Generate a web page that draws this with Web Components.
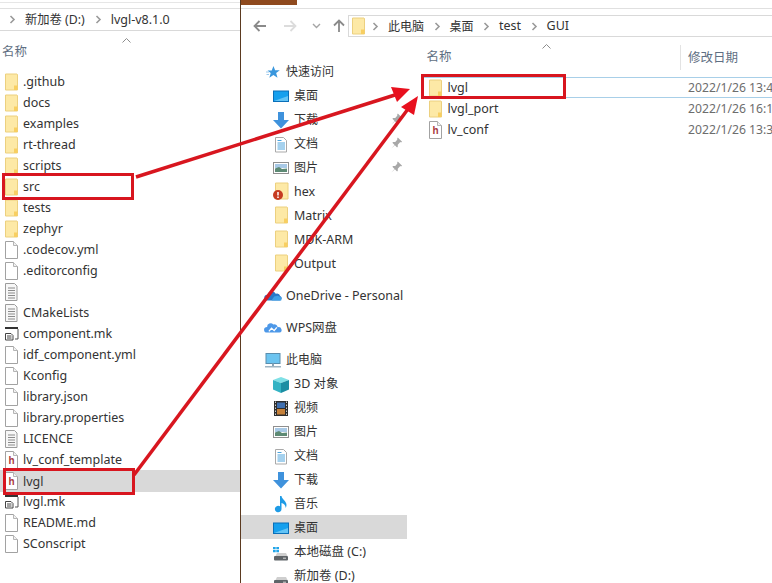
<!DOCTYPE html>
<html>
<head>
<meta charset="utf-8">
<style>
  html, body { margin: 0; background: #fff; }
</style>
</head>
<body>
<shot-page>
  <left-pane slot="left">
    <file-row icon="folder">.github</file-row>
    <file-row icon="folder">docs</file-row>
    <file-row icon="folder">examples</file-row>
    <file-row icon="folder">rt-thread</file-row>
    <file-row icon="folder">scripts</file-row>
    <file-row icon="folder">src</file-row>
    <file-row icon="folder">tests</file-row>
    <file-row icon="folder">zephyr</file-row>
    <file-row icon="file">.codecov.yml</file-row>
    <file-row icon="file">.editorconfig</file-row>
    <file-row icon="text"></file-row>
    <file-row icon="text">CMakeLists</file-row>
    <file-row icon="make">component.mk</file-row>
    <file-row icon="file">idf_component.yml</file-row>
    <file-row icon="file">Kconfig</file-row>
    <file-row icon="file">library.json</file-row>
    <file-row icon="file">library.properties</file-row>
    <file-row icon="text">LICENCE</file-row>
    <file-row icon="hfile">lv_conf_template</file-row>
    <file-row icon="hfile" selected>lvgl</file-row>
    <file-row icon="make">lvgl.mk</file-row>
    <file-row icon="file">README.md</file-row>
    <file-row icon="file">SConscript</file-row>
  </left-pane>
  <right-window slot="right">
    <nav-pane slot="nav">
      <nav-row icon="star" top cjk>快速访问</nav-row>
      <nav-row icon="desktop" sub cjk>桌面</nav-row>
      <nav-row icon="download" sub pinned cjk>下载</nav-row>
      <nav-row icon="doc" sub pinned cjk>文档</nav-row>
      <nav-row icon="picture" sub pinned cjk>图片</nav-row>
      <nav-row icon="folderwarn" sub>hex</nav-row>
      <nav-row icon="navfolder" sub>Matrix</nav-row>
      <nav-row icon="navfolder" sub>MDK-ARM</nav-row>
      <nav-row icon="navfolder" sub>Output</nav-row>
      <nav-row icon="onedrive" top group>OneDrive - Personal</nav-row>
      <nav-row icon="wps" top group>WPS网盘</nav-row>
      <nav-row icon="pc" top group cjk>此电脑</nav-row>
      <nav-row icon="cube" sub>3D 对象</nav-row>
      <nav-row icon="film" sub cjk>视频</nav-row>
      <nav-row icon="picture" sub cjk>图片</nav-row>
      <nav-row icon="doc" sub cjk>文档</nav-row>
      <nav-row icon="download" sub cjk>下载</nav-row>
      <nav-row icon="music" sub cjk>音乐</nav-row>
      <nav-row icon="desktop" sub selected cjk>桌面</nav-row>
      <nav-row icon="drivec" sub>本地磁盘 (C:)</nav-row>
      <nav-row icon="drive" sub>新加卷 (D:)</nav-row>
    </nav-pane>
    <list-pane slot="list">
      <list-row icon="folder" date="2022/1/26 13:4" focused>lvgl</list-row>
      <list-row icon="folder" date="2022/1/26 16:1">lvgl_port</list-row>
      <list-row icon="hfile" date="2022/1/26 13:3">lv_conf</list-row>
    </list-pane>
  </right-window>
</shot-page>

<script>
(function () {

  const FONT = '"Noto Sans", "Noto Sans CJK SC", sans-serif';

  const chevron = '<svg width="7" height="9" viewBox="0 0 7 9"><path d="M1.5 1l3.500 3.500L1.5 8" fill="none" stroke="#9a9a9a" stroke-width="1.6"/></svg>';
  const caret = '<svg width="9" height="5" viewBox="0 0 9 5"><path d="M.5 4.500l4-4 4 4" fill="none" stroke="#8d8d8d"/></svg>';

  const folderBody = '<path d="M2.500 2h11.500l.5.500V18h-12z" fill="#fde9a6" stroke="#ecd07f"/><path d="M11 18v-4.500h3.500V18z" fill="#f8cf62"/>';
  const pageBody = '<path d="M2.500 1.500h8l4 4v13h-12z" fill="#fff" stroke="#a2a2a2"/><path d="M10.500 1.500v4h4" fill="#f1f1f1" stroke="#b5b5b5"/>';

  const drive = '<path d="M4.500 15l1.500-3h9l1.500 3z" fill="#cfcfcf"/><rect x="3" y="15" width="14" height="4.500" rx="1" fill="#5f6468"/><path d="M12 17.200h3" stroke="#d8d8d8"/>';

  const icons = {
    folder: folderBody,
    navfolder: '<g transform="translate(2 0)">' + folderBody + '</g>',
    file: pageBody,
    text: '<path d="M2.500 1.500h9l2.500 2.500v14.500H2.500z" fill="#f7f7f7" stroke="#9c9c9c"/><path d="M5 6h7M5 8.500h7M5 11h7M5 13.500h7M5 16h7" stroke="#8b8b8b"/>',
    make: '<path d="M2 3h13v2H2z" fill="#333"/><path d="M15 5v10h-3" fill="none" stroke="#555"/><path d="M2.500 9.500h5.500l2 2v4.500H2.500z" fill="#fff" stroke="#444"/><path d="M4 12h4.500M4 14h4.500" stroke="#444"/>',
    hfile: pageBody + '<text x="8.500" y="14" text-anchor="middle" font-family="Liberation Sans, sans-serif" font-size="10" font-weight="700" fill="#a83a3f">h</text>',
    star: '<g transform="translate(1.500 3.200) scale(.85)"><path d="M10.500 2l2 5h5.500l-4.300 3.300 1.600 5.700-4.800-3.300-4.800 3.300 1.600-5.700L3.500 7.500h5z" fill="#3a97dd"/></g><path d="M3 11h3M3.500 13.500h2.500" stroke="#9cc9ec"/>',
    desktop: '<rect x="2.500" y="6" width="15" height="10.500" fill="#16a0ee" stroke="#0a6fb8"/><path d="M3 16l14-5v5z" fill="#63c4f6"/>',
    download: '<path d="M7 3h6v8h5l-8 8.500L2 11h5z" fill="#3f92dc"/>',
    doc: '<path d="M4.500 4.500h8l3 3v11.500h-11z" fill="#fff" stroke="#a9a9a9"/><path d="M6.500 7.500h4M6.500 10h7.500M6.500 12h7.500M6.500 14h7.500M6.500 16h7.500" stroke="#4aa3dd"/>',
    picture: '<rect x="2.500" y="5.500" width="15" height="11" fill="#fff" stroke="#8f8f8f"/><rect x="4" y="7" width="12" height="4" fill="#a8c9e6"/><path d="M4 15v-3.500l4-1.500 3 2 5-.5V15z" fill="#5d8a74"/>',
    folderwarn: '<path d="M4.500 2h12.500v16H4.500z" fill="#fde9a6" stroke="#ecd07f"/><circle cx="7" cy="14" r="5" fill="#c63b22"/><path d="M7 11v3.500M7 15.500V17" stroke="#fff" stroke-width="1.500"/>',
    onedrive: '<g transform="translate(1.500 2.500) scale(.88 .82)"><path d="M3 16a3.500 3.500 0 0 1 .5-7 5 5 0 0 1 9.300-1.500 4 4 0 0 1 5 3 3 3 0 0 1 0 5.500z" fill="#2878c8"/><path d="M8 16l3-5 4-1 4 2v4z" fill="#3fa0e6"/></g>',
    wps: '<g transform="translate(1.500 2.500) scale(.88 .82)"><path d="M3 16a3.500 3.500 0 0 1 0-7 4 4 0 0 1 7-3 4.500 4.500 0 0 1 5 3.500 3.300 3.300 0 0 1 2 6.500z" fill="#4d98e8"/><path d="M5 14.500l3-4 3 3 3-4" fill="none" stroke="#fff" stroke-width="1.500"/></g>',
    pc: '<rect x="3" y="4.500" width="14" height="10" fill="#6cc4f0" stroke="#5a8eae"/><path d="M10 14.500v2.500" stroke="#8aa5b8" stroke-width="2"/><path d="M2 17h16v1.500H2z" fill="#9fb4c2"/>',
    cube: '<path d="M10 4l8 3-8 3-8-3z" fill="#7fe0e6"/><path d="M2 7l8 3v10l-8-3.500z" fill="#33b3c4"/><path d="M18 7l-8 3v10l8-3.500z" fill="#1b8ea3"/>',
    film: '<rect x="3" y="4" width="14" height="15" fill="#2d2d2d"/><rect x="6" y="5.500" width="8" height="5.500" fill="#3f6fb0"/><rect x="6" y="12" width="8" height="5.500" fill="#c6813a"/><path d="M4.500 4.500v14M15.500 4.500v14" stroke="#ccc" stroke-dasharray="1.500 1.500"/>',
    music: '<path d="M9 3h1.500c.5 3.500 5 5 5 9 0 1-.3 2-.8 3 0-3-2.200-4.500-4.200-5v6a3.300 3.300 0 1 1-1.500-2.700z" fill="#1e9be6"/>',
    drive: drive,
    drivec: drive + '<path d="M2 6h2.700v2.300H2zM5.300 6H8v2.300H5.300zM2 8.900h2.700v2.300H2zM5.300 8.900H8v2.300H5.300z" fill="#23a5e8"/>',
    pin: '<path d="M11.500 2l6 6-1.500 1-1-.5-3.500 3.500v3l-1 1-3-3-5 4.500 4.500-5-3-3 1-1h3L11 5l-.5-1z" fill="#a8a8a8" transform="translate(2.500 3) scale(.72)"/>'
  };

  class StIcon extends HTMLElement {
    static get observedAttributes() {
      return ["name"];
    }
    constructor() {
      super();
      this.attachShadow({ mode: 'open' });
      this._render();
    }
    attributeChangedCallback() {
      this._render();
    }
    _render() {
      const name = this.getAttribute('name');
      this.shadowRoot.innerHTML = `
        <style>:host { display: block; width: 20px; height: 20px; flex: none; } svg { display: block; }</style>
        <svg width="20" height="20" viewBox="0 0 20 20">${icons[name] || ''}</svg>`;
    }
  }

  const pageTemplate = document.createElement('template');
  pageTemplate.innerHTML = `
  <style>
    :host { display: flex; position: relative; width: 772px; height: 583px; overflow: hidden; background: #fff;
      font: 12.5px/1 ${FONT}; color: #333; }
    ::slotted([slot="left"]) { width: 240px; flex: none; }
    ::slotted([slot="right"]) { flex: 1; min-width: 0; }
    annot-layer { position: absolute; left: 0; top: 0; }
  </style>
  <slot name="left"></slot>
  <slot name="right"></slot>
  <annot-layer></annot-layer>
  `;

  class ShotPage extends HTMLElement {
    constructor() {
      super();
      this.attachShadow({ mode: 'open' });
      this.shadowRoot.appendChild(pageTemplate.content.cloneNode(true));
    }
  }

  const leftTemplate = document.createElement('template');
  leftTemplate.innerHTML = `
  <style>
    :host { display: block; }
    .lines { box-sizing: border-box; border-top: 1px solid #e6e6e6; margin-top: 2px; border-bottom: 1px solid #e0e0e0; height: 7px; }
    .crumbs { display: flex; align-items: center; height: 21px; border-bottom: 1px solid #d9d9d9; padding-left: 9px; color: #333; }
    .crumbs svg { flex: none; }
    .crumbs span { padding-top: 2px; }
    .crumbs span:nth-of-type(1) { margin: 0 10px 0 9px; font-size: 12.300px; }
    .crumbs span:nth-of-type(2) { margin-left: 9px; }
    .head { position: relative; height: 40px; color: #5f6f83; }
    .head span { position: absolute; left: 2px; top: 15px; }
    .head svg { position: absolute; left: 122px; top: 7px; }
  </style>
  <div class="lines"></div>
  <div class="crumbs">${chevron}<span>新加卷 (D:)</span>${chevron}<span>lvgl-v8.1.0</span></div>
  <div class="head">${caret}<span>名称</span></div>
  <slot></slot>
  `;

  class LeftPane extends HTMLElement {
    constructor() {
      super();
      this.attachShadow({ mode: 'open' });
      this.shadowRoot.appendChild(leftTemplate.content.cloneNode(true));
    }
  }

  const fileRowTemplate = document.createElement('template');
  fileRowTemplate.innerHTML = `
  <style>
    :host { display: flex; align-items: center; height: 21px; padding-left: 3px; white-space: nowrap; }
    :host([selected]) { background: #d9d9d9; height: 22px; margin-bottom: -1px; }
    span { padding-top: 2px; }
  </style>
  <st-icon></st-icon><span><slot></slot></span>
  `;

  class FileRow extends HTMLElement {
    constructor() {
      super();
      this.attachShadow({ mode: 'open' });
      this.shadowRoot.appendChild(fileRowTemplate.content.cloneNode(true));
    }
    connectedCallback() {
      this.shadowRoot.querySelector('st-icon').setAttribute('name', this.getAttribute('icon'));
    }
  }

  const windowTemplate = document.createElement('template');
  windowTemplate.innerHTML = `
  <style>
    :host { display: flex; flex-direction: column; height: 583px; box-sizing: border-box; border-left: 1.5px solid #5b3a20; }
    .top { height: 9px; box-sizing: border-box; border-bottom: 1px solid #e0e0e0; }
    .tab { width: 56px; height: 5px; background: #8f4a1e; }
    .tools { display: flex; align-items: center; height: 22px; margin-top: 6px; padding-left: 12px; }
    .nav { display: flex; align-items: center; flex: none; width: 94.500px; }
    .nav svg { flex: none; }
    .addr { flex: 1; height: 22px; box-sizing: border-box; display: flex; align-items: center; border: 1px solid #d9d9d9; border-right: 0; padding-left: 1px; color: #333; }
    .addr svg { flex: none; }
    .addr span { margin: 0 9.500px 0 9px; padding-top: 1px; }
    .addr span.cjk { font-size: 12px; }
    .body { display: flex; flex: 1; min-height: 0; margin-top: 1px; }
  </style>
  <div class="top"><div class="tab"></div></div>
  <div class="tools">
    <div class="nav">
      <svg width="14" height="12" viewBox="0 0 14 12" style="margin-right:16px"><path d="M13 6H2M6.500 1L1.500 6l5 5" fill="none" stroke="#8a8a8a" stroke-width="1.800"/></svg>
      <svg width="14" height="12" viewBox="0 0 14 12" style="margin-right:15px"><path d="M1 6h11M7.500 1l5 5-5 5" fill="none" stroke="#dcdcdc" stroke-width="1.800"/></svg>
      <svg width="9" height="6" viewBox="0 0 9 6" style="margin-right:12px"><path d="M1 1l3.500 3.500L8 1" fill="none" stroke="#a5a5a5" stroke-width="1.400"/></svg>
      <svg width="12" height="14" viewBox="0 0 12 14"><path d="M6 13V2M1 6.500l5-5 5 5" fill="none" stroke="#8a8a8a" stroke-width="1.800"/></svg>
    </div>
    <div class="addr">
      <st-icon name="folder" style="margin-right:2.500px"></st-icon>
      ${chevron}<span class="cjk">此电脑</span>${chevron}<span class="cjk">桌面</span>${chevron}<span>test</span>${chevron}<span>GUI</span>
    </div>
  </div>
  <div class="body"><slot name="nav"></slot><slot name="list"></slot></div>
  `;

  class RightWindow extends HTMLElement {
    constructor() {
      super();
      this.attachShadow({ mode: 'open' });
      this.shadowRoot.appendChild(windowTemplate.content.cloneNode(true));
    }
  }

  class NavPane extends HTMLElement {
    constructor() {
      super();
      this.attachShadow({ mode: 'open' }).innerHTML = `
        <style>:host { display: block; width: 165.500px; flex: none; padding-top: 21px; overflow: hidden; }</style>
        <slot></slot>`;
    }
  }

  const navRowTemplate = document.createElement('template');
  navRowTemplate.innerHTML = `
  <style>
    :host { display: flex; align-items: center; position: relative; height: 24px; gap: 3px; padding-left: 30px; white-space: nowrap; color: #333; }
    :host([top]) { padding-left: 22px; }
    :host([group]) { margin-top: 8px; }
    :host([selected]) { background: #d9d9d9; }
    :host([cjk]) { font-size: 12px; }
    .t { padding-top: 2px; }
    .pin { position: absolute; left: 146px; top: 2px; display: none; }
    :host([pinned]) .pin { display: block; }
  </style>
  <st-icon class="main"></st-icon><span class="t"><slot></slot></span><st-icon class="pin" name="pin"></st-icon>
  `;

  class NavRow extends HTMLElement {
    constructor() {
      super();
      this.attachShadow({ mode: 'open' });
      this.shadowRoot.appendChild(navRowTemplate.content.cloneNode(true));
    }
    connectedCallback() {
      this.shadowRoot.querySelector('.main').setAttribute('name', this.getAttribute('icon'));
    }
  }

  const listTemplate = document.createElement('template');
  listTemplate.innerHTML = `
  <style>
    :host { display: block; flex: 1; min-width: 0; overflow: hidden; padding-top: 7px; }
    .head { position: relative; display: flex; align-items: center; height: 25px; margin-bottom: 7px; color: #5f6f83; padding-left: 20px; }
    .head .col { position: absolute; left: 273px; top: 0; height: 25px; border-left: 1px solid #e3e3e3; padding-left: 7.500px; line-height: 25px; }
    .head svg { position: absolute; left: 135px; top: -1px; }
  </style>
  <div class="head">${caret}<span>名称</span><span class="col">修改日期</span></div>
  <slot></slot>
  `;

  class ListPane extends HTMLElement {
    constructor() {
      super();
      this.attachShadow({ mode: 'open' });
      this.shadowRoot.appendChild(listTemplate.content.cloneNode(true));
    }
  }

  const listRowTemplate = document.createElement('template');
  listRowTemplate.innerHTML = `
  <style>
    :host { display: flex; align-items: center; height: 21px; box-sizing: border-box; margin-left: 15px; padding-left: 5px; white-space: nowrap; }
    :host([focused]) { border-top: 1px solid #a8cfe8; border-bottom: 1px solid #a8cfe8; }
    .name { width: 261.500px; flex: none; display: flex; align-items: center; gap: 1px; }
    .name span { padding-top: 2px; }
    .date { color: #6d6d6d; padding-top: 2px; font-size: 12.200px; }
  </style>
  <div class="name"><st-icon></st-icon><span><slot></slot></span></div><span class="date"></span>
  `;

  class ListRow extends HTMLElement {
    constructor() {
      super();
      this.attachShadow({ mode: 'open' });
      this.shadowRoot.appendChild(listRowTemplate.content.cloneNode(true));
    }
    connectedCallback() {
      this.shadowRoot.querySelector('st-icon').setAttribute('name', this.getAttribute('icon'));
      this.shadowRoot.querySelector('.date').textContent = this.getAttribute('date');
    }
  }

  class AnnotLayer extends HTMLElement {
    constructor() {
      super();
      this.attachShadow({ mode: 'open' }).innerHTML = `
        <style>:host { display: block; width: 772px; height: 583px; pointer-events: none; } svg { display: block; }</style>
        <svg width="772" height="583" viewBox="0 0 772 583" fill="none" stroke="#d8161f" stroke-width="3">
          <rect x="3.500" y="174.500" width="129" height="24"/>
          <rect x="4.500" y="469.500" width="129" height="24"/>
          <rect x="422.500" y="75.500" width="142" height="22"/>
          <path d="M136 177L398 94" stroke-width="3.500"/>
          <path d="M134 475L408 109" stroke-width="3.500"/>
          <path d="M410 89L391 87L397 102z" fill="#e8101e" stroke="none"/>
          <path d="M418 96L401 107L414 115z" fill="#e8101e" stroke="none"/>
        </svg>`;
    }
  }

  customElements.define('st-icon', StIcon);
  customElements.define('annot-layer', AnnotLayer);
  customElements.define('shot-page', ShotPage);
  customElements.define('left-pane', LeftPane);
  customElements.define('file-row', FileRow);
  customElements.define('right-window', RightWindow);
  customElements.define('nav-pane', NavPane);
  customElements.define('nav-row', NavRow);
  customElements.define('list-pane', ListPane);
  customElements.define('list-row', ListRow);

})();
</script>
</body>
</html>
